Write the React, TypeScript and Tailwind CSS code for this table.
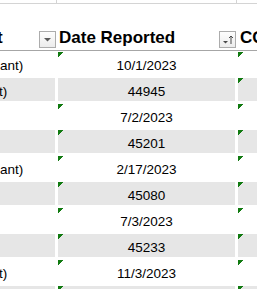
import React from "react";

const rows: { a: string; aShift?: boolean; b: string; gray: boolean; triB: boolean }[] = [
  { a: "ant)", b: "10/1/2023", gray: false, triB: true },
  { a: "t)", aShift: true, b: "44945", gray: true, triB: false },
  { a: "", b: "7/2/2023", gray: false, triB: true },
  { a: "", b: "45201", gray: true, triB: true },
  { a: "ant)", b: "2/17/2023", gray: false, triB: true },
  { a: "", b: "45080", gray: true, triB: true },
  { a: "", b: "7/3/2023", gray: false, triB: true },
  { a: "", b: "45233", gray: true, triB: true },
  { a: "t)", aShift: true, b: "11/3/2023", gray: false, triB: true },
  { a: "", b: "", gray: true, triB: true },
];

function Tri() {
  return (
    <svg className="absolute left-0 top-0" width="5" height="5" viewBox="0 0 5 5" shapeRendering="crispEdges">
      <polygon points="0,0 5,0 0,5" fill="#117a11" />
    </svg>
  );
}

function FilterBtn({ sorted }: { sorted?: boolean }) {
  return (
    <div className="w-[17px] h-[17px] border border-[#acacac] bg-gradient-to-b from-[#fdfdfd] to-[#ececec] shrink-0">
      <svg width="15" height="15" viewBox="0 0 15 15">
        {sorted ? (
          <>
            <polygon points="3,9 8,9 5.5,11.5" fill="#4a4a4a" />
            <line x1="11" y1="4" x2="11" y2="12" stroke="#4a4a4a" strokeWidth="1" />
            <polyline points="9,6 11,4 13,6" fill="none" stroke="#4a4a4a" strokeWidth="1" />
          </>
        ) : (
          <polygon points="4,6 11,6 7.5,9.5" fill="#5a5a5a" />
        )}
      </svg>
    </div>
  );
}

export default function App() {
  return (
    <div className="w-[257px] h-[289px] overflow-hidden bg-white text-black font-['Liberation_Sans',Arial,sans-serif]">
      {/* row above header */}
      <div className="flex h-[4px] border-b border-[#d4d4d4]">
        <div className="w-[57px] shrink-0 border-r border-[#d4d4d4]" />
        <div className="w-[180px] shrink-0 border-r border-[#d4d4d4]" />
        <div className="flex-1" />
      </div>
      {/* header */}
      <div className="flex h-[47px] border-b border-[#a6a6a6] text-[17px] leading-[20px] font-bold">
        <div className="w-[57px] shrink-0 flex items-end pb-[2px] overflow-hidden">
          <span className="ml-[-3px]">t</span>
          <div className="ml-auto mr-[1px]">
            <FilterBtn />
          </div>
        </div>
        <div className="w-[180px] shrink-0 flex items-end pb-[2px] pl-[2px] overflow-hidden">
          <span className="whitespace-nowrap">Date Reported</span>
          <div className="ml-auto mr-[1px]">
            <FilterBtn sorted />
          </div>
        </div>
        <div className="flex-1 flex items-end pb-[2px] pl-[3px] overflow-hidden">
          <span className="whitespace-nowrap">CO</span>
        </div>
      </div>
      {/* data rows */}
      {rows.map((r, i) => (
        <div key={i} className="flex h-[26px] text-[13.5px] leading-[16px]">
          <div className="w-[57px] shrink-0 pt-[1px] pb-[2px] pr-[2px]">
            <div className={`h-full flex items-end pb-[1px] overflow-hidden ${r.gray ? "bg-[#e6e6e6]" : ""}`}>
              <span className={`whitespace-nowrap ${r.aShift ? "ml-[-1px]" : ""}`}>{r.a}</span>
            </div>
          </div>
          <div className="w-[180px] shrink-0 pt-[1px] pb-[2px] pl-[1px] pr-[2px]">
            <div className={`relative h-full flex items-end justify-center pb-[1px] ${r.gray ? "bg-[#e6e6e6]" : ""}`}>
              {r.triB && <Tri />}
              <span>{r.b}</span>
            </div>
          </div>
          <div className="flex-1 pt-[1px] pb-[2px] pl-[1px]">
            <div className={`relative h-full ${r.gray ? "bg-[#e6e6e6]" : ""}`}>
              <Tri />
            </div>
          </div>
        </div>
      ))}
    </div>
  );
}
